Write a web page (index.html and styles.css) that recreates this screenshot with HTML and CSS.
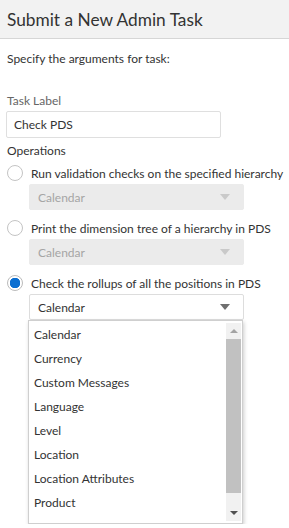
FILE: index.html
```html
<!DOCTYPE html>
<html lang="en">
    <head>
        <meta charset="UTF-8">
        <meta name="viewport" content="width=device-width, initial-scale=1.0">
        <link rel="stylesheet" href="styles.css">
        <title>Submit a New Admin Task</title>
    </head>
    <body>
        <div class="dialog-header">
            <h1>Submit a New Admin Task</h1>
        </div>

        <div class="dialog-body">
            <p class="intro">Specify the arguments for task:</p>

            <label class="field-label">Task Label</label>
            <div class="text-input">Check PDS</div>

            <div class="field-label ops">Operations</div>

            <div class="radio-row first">
                <span class="radio"></span>
                <span>Run validation checks on the specified hierarchy</span>
            </div>
            <div class="select disabled">
                <span>Calendar</span>
                <span class="caret"></span>
            </div>

            <div class="radio-row">
                <span class="radio"></span>
                <span>Print the dimension tree of a hierarchy in PDS</span>
            </div>
            <div class="select disabled">
                <span>Calendar</span>
                <span class="caret"></span>
            </div>

            <div class="radio-row">
                <span class="radio checked"></span>
                <span>Check the rollups of all the positions in PDS</span>
            </div>
            <div class="select open">
                <span>Calendar</span>
                <span class="caret"></span>
            </div>
            <div class="dropdown">
                <ul class="options">
                    <li>Calendar</li>
                    <li>Currency</li>
                    <li>Custom Messages</li>
                    <li>Language</li>
                    <li>Level</li>
                    <li>Location</li>
                    <li>Location Attributes</li>
                    <li>Product</li>
                </ul>
                <div class="scrollbar">
                    <span class="arrow up"></span>
                    <span class="thumb"></span>
                    <span class="arrow down"></span>
                </div>
            </div>
        </div>
    </body>
</html>
```

FILE: styles.css
```css
body {
    margin: 0;
    font-family: Lato, "Noto Sans", sans-serif;
    font-size: 12px;
    color: #333;
    background: #fff;
}

.dialog-header {
    height: 38px;
    background-color: #f2f2f2;
    border-bottom: 1px solid #d6d6d6;
    padding-left: 7px;
    display: flex;
    align-items: center;
}

.dialog-header h1 {
    margin: 0;
    font-size: 17.3px;
    font-weight: 400;
    color: #333;
}

.dialog-body {
    padding: 0 0 0 6px;
}

.intro {
    margin: 11px 0 0 1px;
    line-height: 18px;
}

.field-label {
    display: block;
    color: #666;
    margin: 24px 0 0 1px;
    line-height: 18px;
}

.field-label.ops {
    color: #333;
    margin-top: 4px;
}

.text-input {
    width: 215px;
    height: 27px;
    border: 1px solid #dfdfdf;
    border-radius: 2px;
    margin-top: 1px;
    padding-left: 7px;
    display: flex;
    align-items: center;
    box-sizing: border-box;
}

.radio-row {
    display: flex;
    align-items: center;
    height: 22px;
    margin-top: 7px;
    white-space: nowrap;
}

.radio-row.first {
    margin-top: 2px;
}

.radio {
    width: 14px;
    height: 14px;
    border: 1px solid #c4c4c4;
    border-radius: 50%;
    margin-left: 1px;
    margin-right: 8px;
    flex-shrink: 0;
    background: #fff;
}

.radio.checked {
    border-color: #bbb;
    background: radial-gradient(circle, #0a6ed1 0 5px, #fff 5.5px);
}

.select {
    width: 215px;
    height: 26px;
    box-sizing: border-box;
    margin-left: 23px;
    padding: 0 13px 0 8px;
    display: flex;
    align-items: center;
    justify-content: space-between;
    border: 1px solid #e0e0e0;
    border-radius: 2px;
}

.select.disabled {
    background-color: #ebebeb;
    border-color: #ebebeb;
    color: #a5a5a5;
}

.caret {
    width: 0;
    height: 0;
    border-left: 5px solid transparent;
    border-right: 5px solid transparent;
    border-top: 6px solid #6f6f6f;
}

.disabled .caret {
    border-top-color: #c9c9c9;
}

.select.open {
    border-color: #ddd;
}

.dropdown {
    margin-left: 22px;
    width: 215px;
    height: 204px;
    box-sizing: border-box;
    background: #fff;
    border: 1px solid #cfcfcf;
    box-shadow: 1px 2px 4px rgba(0, 0, 0, 0.2);
    display: flex;
}

.options {
    list-style: none;
    margin: 0;
    padding: 2px 0 0 0;
    flex: 1;
}

.options li {
    height: 24px;
    line-height: 24px;
    padding-left: 5px;
    color: #333;
}

.scrollbar {
    width: 15px;
    margin: 2px 1px 2px 0;
    background: #f1f1f1;
    display: flex;
    flex-direction: column;
    align-items: center;
}

.arrow {
    width: 0;
    height: 0;
    border-left: 4px solid transparent;
    border-right: 4px solid transparent;
    margin: 6px 0;
}

.arrow.up {
    border-bottom: 4px solid #a3a3a3;
}

.arrow.down {
    border-top: 4px solid #505050;
}

.thumb {
    width: 15px;
    flex: 1;
    margin-bottom: 12px;
    background: #c1c1c1;
}
```
